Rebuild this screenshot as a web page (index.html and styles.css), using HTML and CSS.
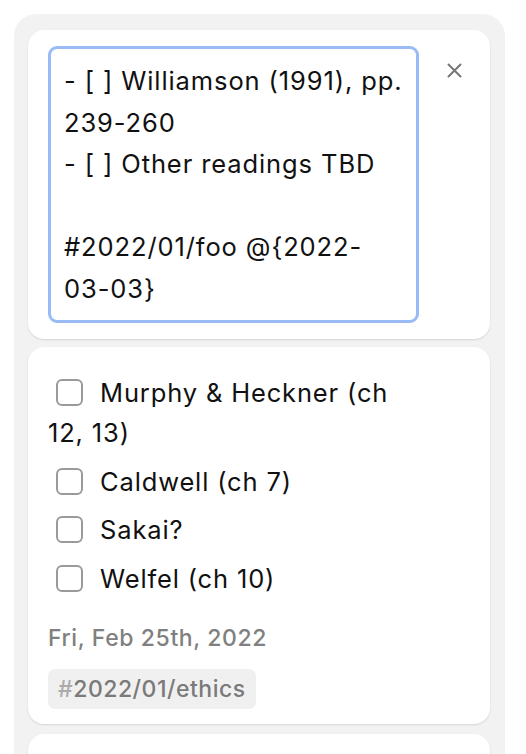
FILE: index.html
```html
<!DOCTYPE html>
<html>
<head>
<meta charset="utf-8">
<link rel="stylesheet" href="styles.css">
</head>
<body>
<div class="column">
  <div class="card editor-card">
    <div class="editor"><div class="line">- [ ] Williamson (1991), pp.</div><div class="line">239-260</div><div class="line">- [ ] Other readings TBD</div><div class="line">&nbsp;</div><div class="line">#2022/01/foo @{2022-</div><div class="line">03-03}</div></div>
    <button class="close" aria-label="Close">
      <svg width="15" height="15" viewBox="0 0 15 15"><path d="M1.5 1.5 L13.5 13.5 M13.5 1.5 L1.5 13.5" stroke="#777" stroke-width="2" stroke-linecap="round" fill="none"/></svg>
    </button>
  </div>
  <div class="card note-card">
    <ul class="tasks">
      <li><span class="box"></span>Murphy &amp; Heckner (ch 12, 13)</li>
      <li><span class="box"></span>Caldwell (ch 7)</li>
      <li><span class="box"></span>Sakai?</li>
      <li><span class="box"></span>Welfel (ch 10)</li>
    </ul>
    <div class="date">Fri, Feb 25th, 2022</div>
    <span class="tag"><span class="hash">#</span>2022/01/ethics</span>
  </div>
  <div class="card stub-card"></div>
</div>
</body>
</html>
```
FILE: styles.css
```css
html, body {
  margin: 0;
  padding: 0;
  background: #ffffff;
}
body {
  font-family: Inter, "Noto Sans", "Liberation Sans", sans-serif;
  color: #111111;
}
.column {
  margin: 14px 0 0 14px;
  width: 491px;
  height: 760px;
  background: #f2f2f2;
  border-radius: 22px 22px 0 0;
  padding: 16px 15px 0 14px;
  box-sizing: border-box;
  display: flex;
  flex-direction: column;
  gap: 8px;
}
.card {
  background: #ffffff;
  border-radius: 16px;
  box-shadow: 0 1px 2px rgba(0,0,0,0.12);
}
.editor-card {
  display: flex;
  align-items: flex-start;
  padding: 16px 20px 16px 20px;
}
.editor {
  width: 371px;
  box-sizing: border-box;
  border: 3px solid #99bcf6;
  border-radius: 9px;
  padding: 11px 0 11px 13px;
  font-size: 25.5px;
  line-height: 41.5px;
  white-space: pre;
  letter-spacing: 0.9px;
}
.close {
  border: 0;
  background: transparent;
  padding: 0;
  margin: 17px 0 0 28px;
  width: 15px;
  height: 15px;
  display: block;
  cursor: pointer;
}
.close svg { display: block; }
.note-card {
  padding: 26px 20px 15px 20px;
}
.tasks {
  list-style: none;
  margin: 0;
  padding: 0;
  font-size: 25.5px;
  line-height: 40px;
  letter-spacing: 0.85px;
  width: 370px;
}
.tasks li {
  margin-bottom: 8.5px;
}
.tasks li:last-child { margin-bottom: 0; }
.box {
  display: inline-block;
  width: 23px;
  height: 23px;
  border: 2px solid #9a9a9a;
  border-radius: 6px;
  vertical-align: -4px;
  margin: 0 17px 0 8px;
  background: #fff;
}
.date {
  margin-top: 23px;
  font-size: 23px;
  line-height: 33px;
  font-weight: 500;
  letter-spacing: 0.6px;
  color: #808080;
}
.tag {
  display: inline-block;
  margin-top: 14px;
  background: #f0f0f0;
  border-radius: 7px;
  padding: 0 10px;
  height: 40px;
  line-height: 40px;
  font-size: 23px;
  font-weight: 500;
  letter-spacing: 0.5px;
  color: #7a7a7a;
}
.hash { color: #ababab; }
.stub-card {
  height: 60px;
  border-radius: 16px 16px 0 0;
  margin-top: 2px;
}
```
